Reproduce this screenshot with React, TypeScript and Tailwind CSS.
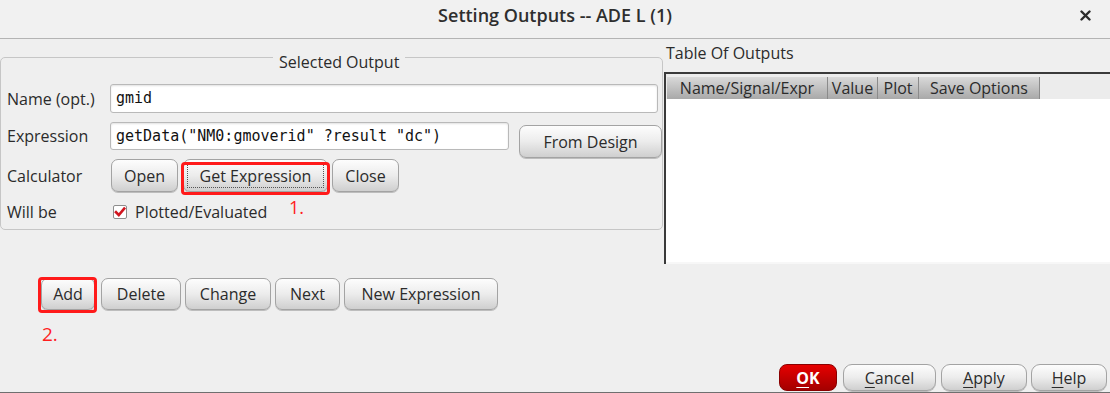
import React from 'react'

const btn =
  'flex items-center justify-center rounded-[7px] border border-[#a3a3a3] bg-gradient-to-b from-[#fdfdfd] via-[#ececec] to-[#cfcfcf] shadow-[0_1px_0_#bdbdbd] text-[16px] text-[#2b2b2b] leading-none'

function Button({ label, className = '' }: { label: React.ReactNode; className?: string }) {
  return <div className={`${btn} ${className}`}>{label}</div>
}

function CheckMark() {
  return (
    <svg width="12" height="12" viewBox="0 0 12 12">
      <path d="M2 6.2 L4.8 9 L10.2 2.6" fill="none" stroke="#d0141e" strokeWidth="2.6" strokeLinecap="square" />
    </svg>
  )
}

function TextInput({ value, className = '' }: { value: string; className?: string }) {
  return (
    <div
      className={`flex items-center rounded-[3px] border border-[#b9b9b9] bg-white pl-[5px] shadow-[inset_0_1px_2px_rgba(0,0,0,0.12)] font-['DejaVu_Sans_Mono',monospace] text-[15px] text-[#111] ${className}`}
    >
      {value}
    </div>
  )
}

const columns = [
  { label: 'Name/Signal/Expr', w: 'w-[161px]' },
  { label: 'Value', w: 'w-[50px]' },
  { label: 'Plot', w: 'w-[41px]' },
  { label: 'Save Options', w: 'w-[121px]' },
]

export default function App() {
  return (
    <div className="w-[1110px] h-[393px] overflow-hidden flex flex-col bg-[#efefef] border-b border-[#6f6f6f] font-['Open_Sans',sans-serif] text-[16px] text-[#2b2b2b]">
      {/* Title bar */}
      <div className="relative h-[39px] shrink-0 flex justify-center pt-[3px] border-b border-[#b4b4b4] bg-[#f1f1f1]">
        <span className="leading-[24px] text-[18px] font-semibold text-[#2e2e2e]">Setting Outputs -- ADE L (1)</span>
        <svg className="absolute right-[19px] top-[10px]" width="11" height="11" viewBox="0 0 11 11">
          <path d="M1.5 1.5 L9.5 9.5 M9.5 1.5 L1.5 9.5" stroke="#2b2b2b" strokeWidth="2.4" strokeLinecap="round" />
        </svg>
      </div>

      <div className="flex">
        {/* Left column */}
        <div className="w-[664px] shrink-0 flex flex-col">
          <div className="relative mt-[18px] h-[173px] w-[663px] rounded-[5px] border border-[#c6c6c6] pt-[26px] pl-[6px]">
            <span className="absolute left-[272px] -top-[6px] px-[6px] bg-[#efefef] leading-[20px] text-[#2b2b2b]">
              Selected Output
            </span>

            <div className="flex h-[29px] items-center">
              <span className="w-[103px] shrink-0">Name (opt.)</span>
              <TextInput value="gmid" className="h-[29px] w-[548px]" />
            </div>

            <div className="mt-[9px] flex h-[28px] items-start">
              <span className="w-[103px] shrink-0 leading-[28px]">Expression</span>
              <TextInput value={'getData("NM0:gmoverid" ?result "dc")'} className="h-[28px] w-[400px]" />
              <Button label="From Design" className="ml-[10px] mt-[3px] h-[33px] w-[143px] shrink-0" />
            </div>

            <div className="mt-[9px] flex h-[33px] items-center">
              <span className="w-[104px] shrink-0">Calculator</span>
              <Button label="Open" className="h-[33px] w-[67px]" />
              <div className="relative ml-[5px]">
                <Button
                  label={
                    <span className="flex h-[25px] w-[137px] items-center justify-center border border-dotted border-[#555]">
                      Get Expression
                    </span>
                  }
                  className="h-[33px] w-[145px]"
                />
                <div className="absolute -left-[2px] -right-[2px] top-[3px] -bottom-[3px] rounded-[4px] border-[3px] border-[#ff1a1a]" />
              </div>
              <Button label="Close" className="ml-[4px] h-[33px] w-[67px]" />
            </div>

            <div className="mt-[10px] flex h-[20px] items-center">
              <span className="w-[106px] shrink-0">Will be</span>
              <div className="flex h-[14px] w-[14px] items-center justify-center rounded-[2px] border border-[#8d8d8d] bg-white">
                <CheckMark />
              </div>
              <span className="ml-[8px]">Plotted/Evaluated</span>
            </div>

            <span className="absolute left-[288px] top-[139px] text-[18px] leading-[20px] text-[#ff2020]">1.</span>
          </div>

          <div className="mt-[48px] ml-[41px] flex h-[32px] items-center">
            <div className="relative mr-[2px]">
              <Button label="Add" className="h-[32px] w-[54px]" />
              <div className="absolute -left-[3px] -right-[2px] -top-[1px] -bottom-[3px] rounded-[4px] border-[3px] border-[#ff1a1a]" />
            </div>
            <Button label="Delete" className="ml-[4px] h-[32px] w-[80px]" />
            <Button label="Change" className="ml-[4px] h-[32px] w-[86px]" />
            <Button label="Next" className="ml-[4px] h-[32px] w-[65px]" />
            <Button label="New Expression" className="ml-[4px] h-[32px] w-[154px]" />
          </div>

          <span className="mt-[14px] ml-[42px] text-[19px] leading-[20px] text-[#ff1e1e]">2.</span>
        </div>

        {/* Right column */}
        <div className="flex-1 flex flex-col">
          <span className="mt-[4px] pl-[2px] leading-[20px]">Table Of Outputs</span>
          <div className="mt-[9px] h-[192px] flex flex-col border-t-2 border-l-2 border-[#3a3a3a] bg-[#ececec]">
            <div className="mt-[3px] flex h-[22px] pl-[1px]">
              {columns.map((c) => (
                <div
                  key={c.label}
                  className={`${c.w} flex items-center justify-center border-r border-[#8b8b8b] bg-gradient-to-b from-[#d9d9d9] to-[#a9a9a9] text-[16px] text-[#2b2b2b]`}
                >
                  {c.label}
                </div>
              ))}
            </div>
            <div className="flex-1 bg-white border-b-2 border-[#f7f7f7]" />
          </div>
        </div>
      </div>

      {/* Footer */}
      <div className="mt-auto mb-[1px] flex justify-end pr-[3px]">
        <div className="flex h-[27px] w-[58px] items-center justify-center rounded-[8px] border border-[#8a0000] bg-gradient-to-b from-[#e60000] to-[#a40000] text-[16px] font-bold text-white">
          <span className="underline underline-offset-[3px]">O</span>K
        </div>
        <Button label={<span><span className="underline underline-offset-[3px]">C</span>ancel</span>} className="ml-[6px] h-[27px] w-[93px] rounded-[9px]" />
        <Button label={<span><span className="underline underline-offset-[3px]">A</span>pply</span>} className="ml-[5px] h-[27px] w-[86px] rounded-[9px]" />
        <Button label={<span><span className="underline underline-offset-[3px]">H</span>elp</span>} className="ml-[4px] h-[27px] w-[76px] rounded-[9px]" />
      </div>
    </div>
  )
}
